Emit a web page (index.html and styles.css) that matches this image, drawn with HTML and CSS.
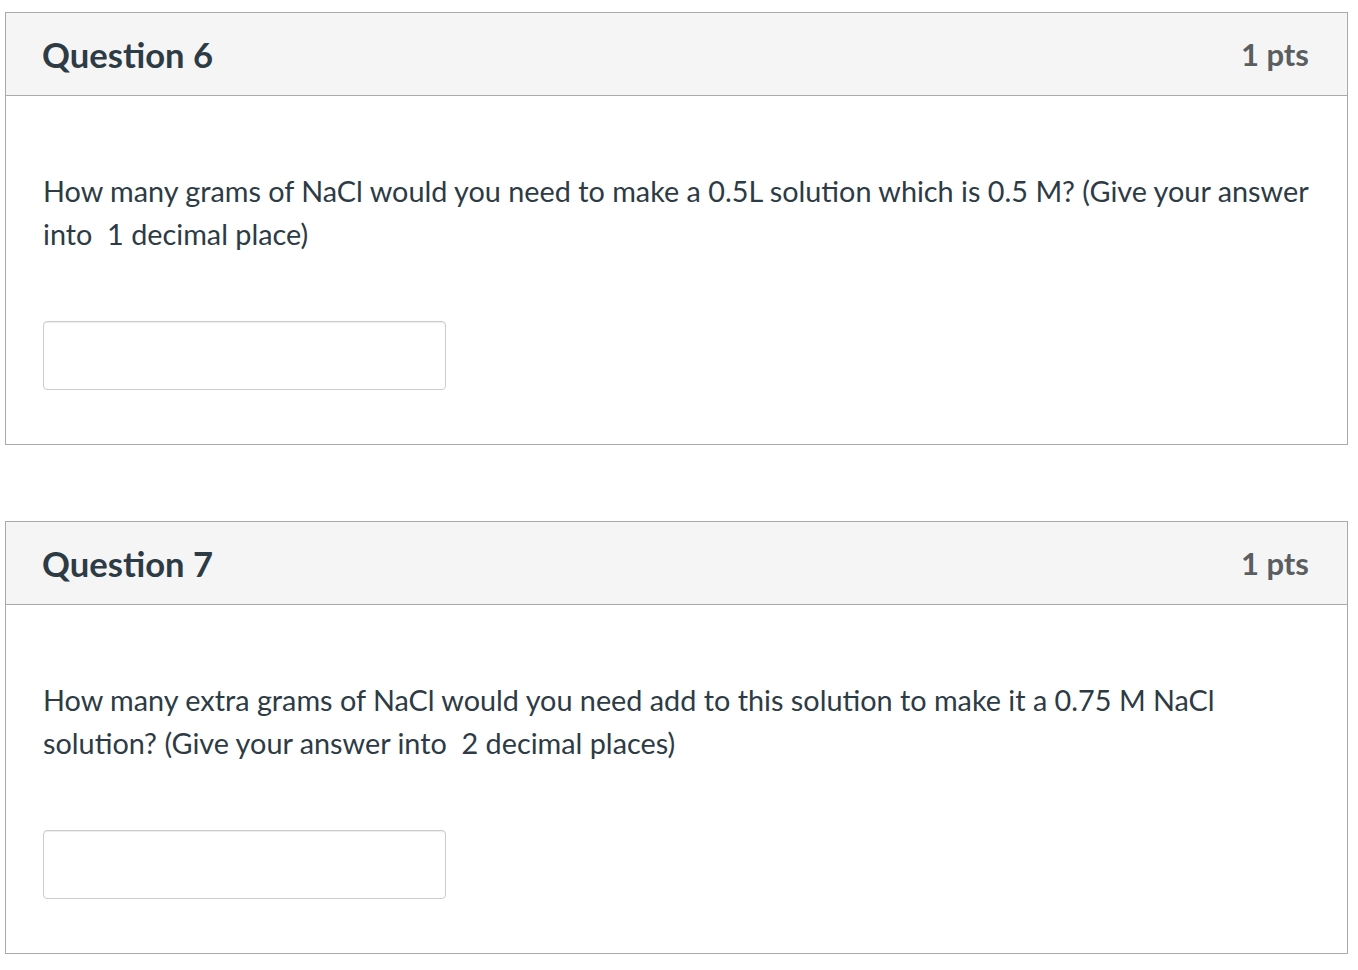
FILE: index.html
```html
<!DOCTYPE html>
<html>
<head>
<meta charset="utf-8">
<link rel="stylesheet" href="styles.css">
</head>
<body>
<div class="quiz">
  <div class="question">
    <div class="q-header">
      <span class="q-title">Question 6</span>
      <span class="q-pts">1 pts</span>
    </div>
    <div class="q-body">
      <p class="q-text">How many grams of NaCl would you need to make a 0.5L solution which is 0.5 M? (Give your answer into&nbsp; 1 decimal place)</p>
      <input class="q-input" type="text">
    </div>
  </div>
  <div class="question">
    <div class="q-header">
      <span class="q-title">Question 7</span>
      <span class="q-pts">1 pts</span>
    </div>
    <div class="q-body">
      <p class="q-text">How many extra grams of NaCl would you need add to this solution to make it a 0.75 M NaCl solution? (Give your answer into&nbsp; 2 decimal places)</p>
      <input class="q-input" type="text">
    </div>
  </div>
</div>
</body>
</html>
```
FILE: styles.css
```css
html, body {
  margin: 0;
  padding: 0;
  background: #ffffff;
}
body {
  font-family: Lato, "Open Sans", sans-serif;
  color: #2d3b45;
}
.quiz {
  padding: 12px 0 0 5px;
  width: 1343px;
  display: flex;
  flex-direction: column;
  gap: 76px;
}
.question {
  border: 1px solid #aaaaaa;
  background: #fff;
}
.q-header {
  height: 82px;
  background: #f5f5f5;
  border-bottom: 1px solid #aaaaaa;
  display: flex;
  align-items: center;
  justify-content: space-between;
  padding: 0 38px 0 36px;
}
.q-title {
  font-size: 34.6px;
  font-weight: 700;
  color: #2d3b45;
}
.q-pts {
  font-size: 31px;
  font-weight: 700;
  color: #5b5e61;
}
.q-body {
  padding: 74px 37px 54px 37px;
}
.q-text {
  margin: 0;
  font-size: 28.8px;
  line-height: 42.5px;
  color: #2d3b45;
}
.q-input {
  display: block;
  box-sizing: border-box;
  margin-top: 66px;
  width: 403px;
  height: 69px;
  border: 1px solid #cccccc;
  border-radius: 4px;
  box-shadow: inset 0 1px 1px rgba(0,0,0,0.075);
  background: #fff;
  outline: none;
  padding: 0;
}
```
